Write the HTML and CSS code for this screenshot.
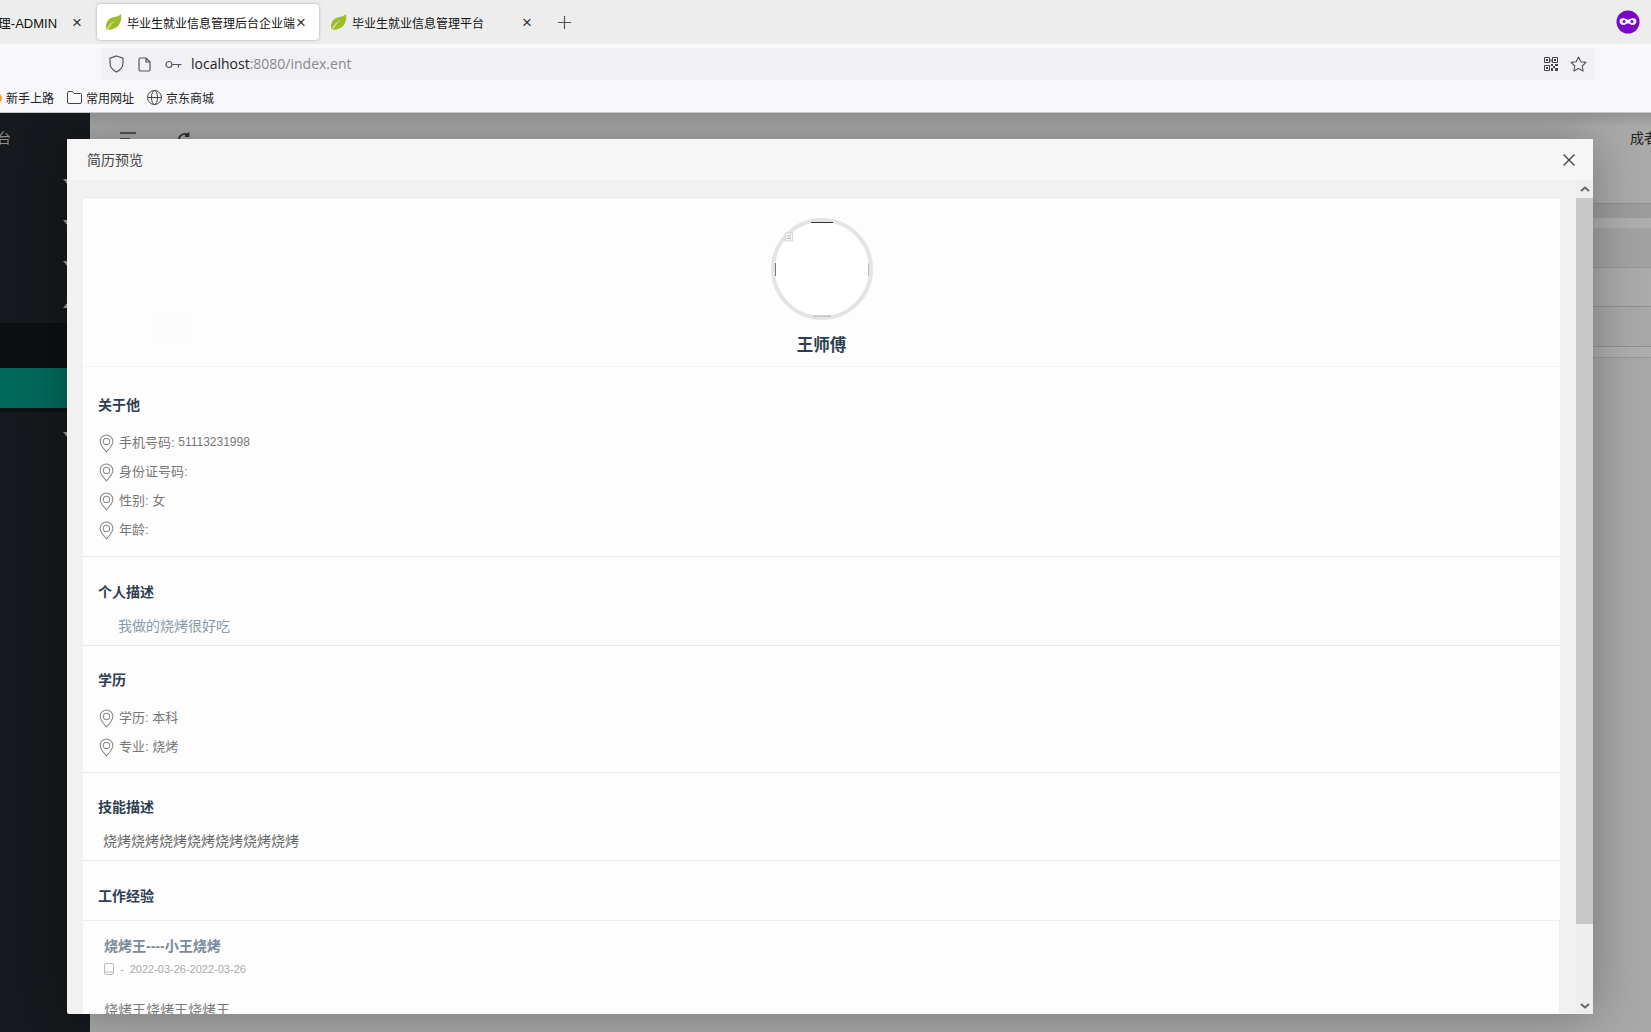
FILE: index.html
```html
<!DOCTYPE html>
<html lang="zh">
<head>
    <meta charset="UTF-8">
    <title>简历预览</title>
    <link rel="stylesheet" href="styles.css">
</head>
<body>
    <svg class="sprites" width="0" height="0">
        <symbol id="leaf" viewBox="0 0 16 16">
            <path d="M1 13C.5 8 3 4 8 3c3-.5 5-1 7-3 1 5-.5 10-4 12.500-3 2-7 2.500-9 2.500z" fill="#9cbc2c"/>
            <path d="M1 15c2-5 5-8 9-9-3 2-5 5-7 9z" fill="#d3dd6a"/>
        </symbol>
        <symbol id="pin" viewBox="0 0 14 18">
            <path d="M7 17C4 13.500 1 10.500 1 7a6 6 0 0 1 12 0c0 3.500-3 6.500-6 10z" fill="none" stroke="#8c8c8c"/>
            <circle cx="7" cy="7" r="3" fill="none" stroke="#8c8c8c"/>
        </symbol>
    </svg>

    <div class="tabs">
        <div class="tab tab-first"><span class="tab-name">理-ADMIN</span><span class="tab-close">×</span></div>
        <div class="tab tab-active">
            <svg class="tab-icon"><use href="#leaf"/></svg>
            <span class="tab-name">毕业生就业信息管理后台企业端</span><span class="tab-close">×</span>
        </div>
        <div class="tab tab-last">
            <svg class="tab-icon"><use href="#leaf"/></svg>
            <span class="tab-name">毕业生就业信息管理平台</span><span class="tab-close">×</span>
        </div>
        <svg class="tab-new" width="13" height="13" viewBox="0 0 13 13"><path d="M6.500 0v13M0 6.500h13" stroke="#555" stroke-width="1.200"/></svg>
        <svg class="mask" width="24" height="24" viewBox="0 0 24 24">
            <circle cx="12" cy="12" r="11.500" fill="#7a06c6"/>
            <path d="M3.500 11c0-2.500 3-3 5-2.500 1.500.4 2.500 1.200 3.500 1.200s2-.8 3.500-1.200c2-.5 5 0 5 2.500 0 3-2.500 4.500-4.500 4-2-.4-2.500-1.700-4-1.700s-2 1.300-4 1.700c-2 .5-4.500-1-4.500-4z" fill="#fff"/>
            <circle cx="8" cy="11.500" r="1.600" fill="#7a06c6"/>
            <circle cx="16" cy="11.500" r="1.600" fill="#7a06c6"/>
        </svg>
    </div>

    <div class="address-row">
        <div class="address">
            <svg width="15" height="18" viewBox="0 0 15 18"><path d="M7.500 1L14 3.200V8c0 4-2.500 7-6.500 9C3.500 15 1 12 1 8V3.200z" fill="none" stroke="#555" stroke-width="1.200"/></svg>
            <svg width="13" height="15" viewBox="0 0 13 15"><path d="M1 2.500A1.500 1.500 0 0 1 2.500 1H8l4 4v7.500a1.500 1.500 0 0 1-1.500 1.500h-8A1.500 1.500 0 0 1 1 12.500zM8 1v4h4" fill="none" stroke="#555" stroke-width="1.200"/></svg>
            <svg class="key" width="17" height="9" viewBox="0 0 17 9"><circle cx="4" cy="4.500" r="3" fill="none" stroke="#555" stroke-width="1.200"/><path d="M7 4.500h9.500M13.500 4.500v3" fill="none" stroke="#555" stroke-width="1.200"/></svg>
            <span class="url">localhost<span class="url-rest">:8080/index.ent</span></span>
            <svg class="qr" width="14" height="14" viewBox="0 0 14 14">
                <path d="M.5.500h5v5h-5zM8.500.500h5v5h-5zM.5 8.500h5v5h-5z" fill="none" stroke="#444"/>
                <path d="M2 2h2v2H2zM10 2h2v2h-2zM2 10h2v2H2zM7 7h2v2H7zM9 9h2v2H9zM11 7h3v2h-3zM7 11h2v3H7zM11 11h3v3h-3zM6.500 2h1v3h-1z" fill="#444"/>
            </svg>
            <svg class="star" width="17" height="16" viewBox="0 0 17 16"><path d="M8.500 1l2.300 4.700 5.200.7-3.800 3.600.9 5.100-4.600-2.500-4.600 2.500.9-5.100L1 6.400l5.200-.7z" fill="none" stroke="#555" stroke-width="1.100" stroke-linejoin="round"/></svg>
        </div>
    </div>

    <div class="bookmarks">
        <span class="bookmark-dot"></span>
        <span class="bookmark">新手上路</span>
        <svg class="bookmark-icon" width="15" height="13" viewBox="0 0 15 13"><path d="M.5 2A1.500 1.500 0 0 1 2 .5h3.500L7 2.500h6.500A1 1 0 0 1 14.500 3.500V11a1.500 1.500 0 0 1-1.500 1.500H2A1.500 1.500 0 0 1 .5 11z" fill="none" stroke="#444"/></svg>
        <span class="bookmark">常用网址</span>
        <svg class="bookmark-icon globe" width="15" height="15" viewBox="0 0 15 15"><circle cx="7.500" cy="7.500" r="7" fill="none" stroke="#444"/><ellipse cx="7.500" cy="7.500" rx="3" ry="7" fill="none" stroke="#444"/><path d="M.5 7.500h14" stroke="#444"/></svg>
        <span class="bookmark">京东商城</span>
    </div>

    <div class="viewport">
        <div class="sidebar">
            <div class="brand">台</div>
            <div class="menu-item"><i class="arrow"></i></div>
            <div class="menu-item"><i class="arrow"></i></div>
            <div class="menu-item"><i class="arrow"></i></div>
            <div class="menu-item"><i class="arrow arrow-up"></i></div>
            <div class="menu-sub"></div>
            <div class="menu-active"></div>
            <div class="menu-gap"></div>
            <div class="menu-item"><i class="arrow"></i></div>
        </div>
        <div class="main">
            <div class="topbar">
                <svg class="top-icon" width="16" height="14" viewBox="0 0 16 14"><path d="M0 1h16M0 7h10M0 13h16" stroke="#333" stroke-width="1.500"/></svg>
                <svg class="top-icon refresh" width="15" height="15" viewBox="0 0 15 15"><path d="M13 7.500A5.500 5.500 0 1 1 11 3.200M11.500 .5v3.500H8" fill="none" stroke="#333" stroke-width="1.800"/></svg>
                <span class="user">成者</span>
            </div>
            <div class="band band-a"></div>
            <div class="band band-b"></div>
            <div class="band band-c"></div>
            <div class="band band-d"></div>
            <div class="band band-e"></div>
            <div class="band band-f"></div>
        </div>

        <div class="modal">
            <div class="modal-title">
                <span class="modal-name">简历预览</span>
                <svg width="12" height="12" viewBox="0 0 12 12"><path d="M.5.500l11 11M11.500.500l-11 11" stroke="#444" stroke-width="1.400"/></svg>
            </div>
            <div class="modal-body">
                <div class="resume-wrap">
                    <div class="resume">
                        <div class="ghost-box"></div>
                        <div class="profile">
                            <svg class="avatar" width="102" height="102" viewBox="0 0 102 102">
                                <circle cx="51" cy="51" r="49" fill="#fff" stroke="#e4e4e4" stroke-width="4"/>
                                <path d="M40 4.500h22" stroke="#333" stroke-width="1"/>
                                <path d="M4.500 45v13" stroke="#777" stroke-width="1"/>
                                <path d="M42 98h18" stroke="#aaa" stroke-width="1"/>
                                <path d="M97.500 45v13" stroke="#bbb" stroke-width="1"/>
                                <path d="M14.500 15h7v8h-7z" fill="#f4f4f4" stroke="#ccc" stroke-width=".8"/>
                                <path d="M16 18h4M16 20.500h4" stroke="#aaa" stroke-width=".8"/>
                            </svg>
                            <div class="name">王师傅</div>
                        </div>

                        <div class="section section-about">
                            <h3>关于他</h3>
                            <div class="info"><svg><use href="#pin"/></svg>手机号码:&nbsp;<span class="num">51113231998</span></div>
                            <div class="info"><svg><use href="#pin"/></svg>身份证号码:</div>
                            <div class="info"><svg><use href="#pin"/></svg>性别:&nbsp;女</div>
                            <div class="info"><svg><use href="#pin"/></svg>年龄:</div>
                        </div>

                        <div class="section section-text">
                            <h3>个人描述</h3>
                            <p class="about-text">我做的烧烤很好吃</p>
                        </div>

                        <div class="section section-edu">
                            <h3>学历</h3>
                            <div class="info"><svg><use href="#pin"/></svg>学历:&nbsp;本科</div>
                            <div class="info"><svg><use href="#pin"/></svg>专业:&nbsp;烧烤</div>
                        </div>

                        <div class="section section-text section-skill">
                            <h3>技能描述</h3>
                            <p class="skill-text">烧烤烧烤烧烤烧烤烧烤烧烤烧烤</p>
                        </div>

                        <div class="section section-work">
                            <h3>工作经验</h3>
                        </div>

                        <div class="job">
                            <div class="job-title">烧烤王----小王烧烤</div>
                            <div class="job-date">
                                <svg width="10" height="12" viewBox="0 0 10 12"><rect x=".5" y=".5" width="9" height="11" rx="1.500" fill="none" stroke="#bbb"/><path d="M.5 9h9" stroke="#bbb"/></svg>
                                <span>-</span>
                                <span>2022-03-26-2022-03-26</span>
                            </div>
                            <div class="job-text">烧烤王烧烤王烧烤王</div>
                        </div>
                    </div>
                </div>
                <div class="scrollbar">
                    <svg class="scroll-btn" width="10" height="6" viewBox="0 0 10 6"><path d="M1 5l4-3.500L9 5" fill="none" stroke="#666" stroke-width="2"/></svg>
                    <div class="scroll-thumb"></div>
                    <svg class="scroll-btn scroll-down" width="10" height="6" viewBox="0 0 10 6"><path d="M1 1l4 3.500L9 1" fill="none" stroke="#666" stroke-width="2"/></svg>
                </div>
            </div>
        </div>
    </div>
</body>
</html>
```

FILE: styles.css
```css
* {
    box-sizing: border-box;
}

html, body {
    height: 1032px;
}

body {
    margin: 0;
    overflow: hidden;
    display: flex;
    flex-direction: column;
    font-family: "Liberation Sans", "Noto Sans CJK SC", sans-serif;
    background-color: #a3a3a3;
}

.sprites {
    position: absolute;
}

/* browser chrome */
.tabs {
    height: 44px;
    flex: none;
    display: flex;
    align-items: flex-start;
    padding-top: 4px;
    background-color: #ededed;
}

.tab {
    height: 36px;
    display: flex;
    align-items: center;
    font-size: 12px;
    color: #111;
    white-space: nowrap;
}

.tab-first {
    width: 92px;
    margin-right: 5px;
    padding-right: 10px;
    justify-content: flex-end;
}

.tab-first .tab-name {
    font-size: 13px;
    margin-right: 15px;
}

.tab-active {
    width: 222px;
    padding-left: 8px;
    background-color: #fff;
    border-radius: 4px;
    box-shadow: 0 0 3px rgba(0, 0, 0, 0.3);
}

.tab-active .tab-close {
    margin-left: 1px;
}

.tab-last {
    width: 231px;
    margin-left: 3px;
    padding-left: 8px;
}

.tab-icon {
    width: 17px;
    height: 17px;
    margin-right: 5px;
    flex: none;
}

.tab-close {
    font-size: 17px;
    font-weight: 300;
    color: #333;
    line-height: 1;
}

.tab-last .tab-name {
    width: 170px;
}

.tab-new {
    margin: 12px 0 0 5px;
}

.mask {
    margin: 6px 11px 0 auto;
}

.address-row {
    height: 41px;
    flex: none;
    padding: 4px 56px 5px 101px;
    background-color: #f8f8fa;
}

.address {
    height: 32px;
    display: flex;
    align-items: center;
    padding: 0 8px;
    background-color: #f1f1f5;
    border-radius: 3px;
}

.address svg {
    margin-right: 14px;
    flex: none;
}

.address .key {
    margin-right: 9px;
}

.url {
    margin-bottom: 2px;
    font-family: "Open Sans", sans-serif;
    font-size: 14px;
    color: #222;
}

.url-rest {
    color: #888;
}

.address .qr {
    margin-left: auto;
    margin-right: 12px;
}

.address .star {
    margin-right: 0;
}

.bookmarks {
    height: 28px;
    flex: none;
    display: flex;
    align-items: center;
    padding-bottom: 2px;
    font-size: 12px;
    color: #222;
    background-color: #f8f8fa;
    border-bottom: 1px solid #c8c8c8;
}

.bookmark-dot {
    width: 6px;
    height: 8px;
    margin-left: -4px;
    border-radius: 50%;
    background-color: #eda834;
}

.bookmark {
    margin-left: 4px;
    width: 48px;
    white-space: nowrap;
}

.bookmark-icon {
    margin-left: 13px;
}

.bookmark-icon.globe {
    margin-left: 13px;
}

/* page behind the dialog */
.viewport {
    flex: 1;
    position: relative;
    display: flex;
    overflow: hidden;
}

.sidebar {
    width: 90px;
    flex: none;
    background-color: #16191d;
}

.brand {
    height: 46px;
    margin-left: -3px;
    padding-top: 15px;
    font-size: 14px;
    line-height: 20px;
    color: #8d8f91;
}

.menu-item {
    height: 41px;
    display: flex;
    align-items: center;
    justify-content: flex-end;
    padding-right: 17px;
}

.arrow {
    width: 0;
    height: 0;
    margin-top: 4px;
    border-left: 5px solid transparent;
    border-right: 5px solid transparent;
    border-top: 6px solid #9b9b9b;
}

.arrow-up {
    border-top: none;
    border-bottom: 6px solid #9b9b9b;
}

.menu-sub {
    height: 45px;
    background-color: #0d1013;
}

.menu-active {
    height: 40px;
    background-color: #00695c;
}

.menu-gap {
    height: 4px;
    background-color: #0d1013;
}

.main {
    flex: 1;
    min-width: 0;
    overflow: hidden;
    background-color: #a8a8a8;
}

.topbar {
    height: 90px;
    display: flex;
    align-items: flex-start;
    padding-top: 15px;
    background: linear-gradient(#949494, #aaaaaa 14px);
}

.top-icon {
    margin: 4px 0 0 30px;
}

.top-icon.refresh {
    margin-left: 41px;
}

.user {
    margin-left: auto;
    margin-right: -7px;
    font-size: 14px;
    line-height: 20px;
    color: #222;
}

.band-a {
    height: 15px;
    background-color: #9c9c9c;
    border-top: 1px solid #8f8f8f;
}

.band-b {
    height: 10px;
    background-color: #aeaeae;
}

.band-c {
    height: 39px;
    background-color: #a2a2a2;
    border-top: 1px solid #a5a5a5;
}

.band-d {
    height: 39px;
    background-color: #ababab;
    border-top: 1px solid #959595;
}

.band-e {
    height: 40px;
    background-color: #a8a8a8;
    border-top: 1px solid #8f8f8f;
}

.band-f {
    height: 12px;
    background-color: #aeaeae;
    border-top: 1px solid #8f8f8f;
    border-bottom: 1px solid #979797;
}

/* dialog */
.modal {
    position: absolute;
    left: 67px;
    top: 26px;
    width: 1526px;
    height: 875px;
    display: flex;
    flex-direction: column;
    background-color: #f1f1f2;
    border-radius: 2px;
    box-shadow: 0 0 50px rgba(0, 0, 0, 0.3);
}

.modal-title {
    height: 41px;
    flex: none;
    display: flex;
    align-items: center;
    justify-content: space-between;
    padding: 0 18px 0 20px;
    font-size: 14px;
    color: #444;
    background-color: #f6f6f7;
}

.modal-name {
    margin-bottom: 2px;
}

.modal-body {
    flex: 1;
    min-height: 0;
    display: flex;
}

.resume-wrap {
    flex: 1;
    min-width: 0;
    overflow: hidden;
    padding: 17px 16px 0;
}

.resume {
    position: relative;
    background-color: #fdfdfd;
    border-top: 1px solid #e8e8e8;
}

.ghost-box {
    position: absolute;
    left: 76px;
    top: 114px;
    width: 30px;
    height: 30px;
    background-color: #fbfcfb;
}

.profile {
    height: 169px;
    padding-top: 20px;
    text-align: center;
    border-bottom: 1px solid #f4f4f4;
}

.avatar {
    display: block;
    margin: 0 auto;
}

.name {
    margin-top: 14px;
    font-size: 16.500px;
    line-height: 22px;
    font-weight: bold;
    color: #2f4050;
}

.section {
    padding: 25px 15px 9px;
    border-bottom: 1px solid #e7e7e7;
}

.section h3 {
    margin: 0;
    font-size: 14px;
    line-height: 20px;
    font-weight: bold;
    color: #2f4050;
}

.section-about {
    padding-top: 28px;
    padding-bottom: 13px;
}

.section-about h3,
.section-edu h3 {
    margin-bottom: 12px;
}

.section-edu {
    padding-top: 24px;
    padding-bottom: 12px;
}

.section-skill {
    padding-top: 24px;
}

.section-work {
    padding-bottom: 14px;
    border-bottom-color: #eeeeee;
}

.info {
    height: 29px;
    display: flex;
    align-items: center;
    font-size: 13px;
    color: #777;
}

.info svg {
    width: 15px;
    height: 19px;
    margin: 4px 5px 0 1px;
    flex: none;
}

.num {
    font-size: 12px;
}

.section p {
    margin: 14px 0 0;
    font-size: 14px;
    line-height: 20px;
}

.about-text {
    padding-left: 20px;
    color: #8b99a6;
}

.skill-text {
    padding-left: 5px;
    color: #666;
}

.job {
    padding: 15px 21px 20px;
    border-right: 1px solid #edeef8;
}

.job-title {
    font-size: 14px;
    line-height: 20px;
    font-weight: bold;
    color: #7b8a9a;
}

.job-date {
    display: flex;
    align-items: center;
    gap: 6px;
    height: 20px;
    margin-top: 3px;
    font-size: 11px;
    color: #aaa;
}

.job-date svg {
    margin-left: 0;
}

.job-text {
    margin-top: 21px;
    font-size: 14px;
    line-height: 20px;
    color: #777;
}

.scrollbar {
    width: 17px;
    flex: none;
    display: flex;
    flex-direction: column;
    align-items: center;
    background-color: #eeeeee;
}

.scroll-btn {
    flex: none;
    margin: 6px 0;
}

.scroll-down {
    margin-bottom: 5px;
}

.scroll-thumb {
    width: 100%;
    height: 726px;
    margin-bottom: auto;
    background-color: #c8c8c8;
}
```
